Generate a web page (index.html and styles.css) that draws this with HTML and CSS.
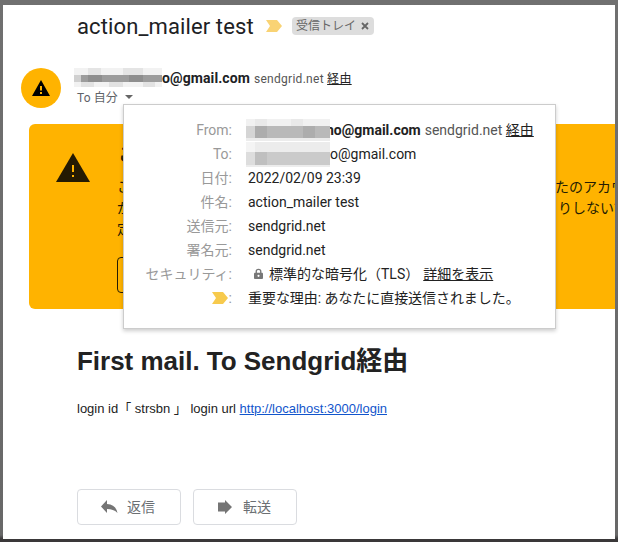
FILE: index.html
```html
<!DOCTYPE html>
<html lang="ja">
<head>
<meta charset="utf-8">
<title>action_mailer test</title>
<link rel="stylesheet" href="styles.css">
</head>
<body>
<main class="window">
  <header class="subject">
    <h1>action_mailer test</h1>
    <svg class="marker" width="17" height="12" viewBox="0 0 17 12"><path d="M0 0H11L16 6L11 12H0L4 6Z"/></svg>
    <span class="label">受信トレイ <svg width="8" height="8" viewBox="0 0 8 8"><path d="M1 1L7 7M7 1L1 7"/></svg></span>
  </header>
  <section class="sender">
    <div class="avatar"><svg width="18" height="16" viewBox="0 0 18 16"><path d="M9 0L18 16H0Z"/><path class="cut" d="M8 6h2v4.5H8zM8 12h2v2H8z"/></svg></div>
    <div class="who">
      <div class="from">
        <svg class="mosaic" width="88" height="19" viewBox="0 0 88 19" shape-rendering="crispEdges">
          <path fill="#f2f2f2" d="M0 0h88v19H0z"/><path fill="#e4e4e4" d="M14 0h13v7H14zM49 0h20v7H49z"/><path fill="#d0d0d0" d="M0 7h7v7H0z"/><path fill="#9c9c9c" d="M7 7h81v7H7z"/><path fill="#8e8e8e" d="M14 7h14v7H14zM55 7h14v7H55z"/><path fill="#e2e2e2" d="M7 14h13v5H7zM35 14h14v5H35zM69 14h12v5H69z"/>
        </svg><b>o@gmail.com</b><span class="via">sendgrid.net <u>経由</u></span>
      </div>
      <div class="to">To 自分 <i class="caret"></i></div>
    </div>
  </section>
  <section class="banner">
    <svg class="alert" width="34" height="29" viewBox="0 0 34 29"><path d="M17 0L34 29H0Z"/><path class="cut" d="M16 12h2v7h-2zM16 22h2v2h-2z"/></svg>
    <div class="warning">
      <strong>こ</strong>
      <p><span>こ</span><span class="tail">たのアカウ</span></p>
      <p><span>が</span><span class="tail second">りしないで</span></p>
      <p><span>定</span></p>
      <span class="action"></span>
    </div>
  </section>
  <article class="mail">
    <h2>First mail. To Sendgrid経由</h2>
    <p>login id「 strsbn 」 login url <a href="#">http://localhost:3000/login</a></p>
  </article>
  <footer class="replies">
    <button><svg width="17" height="14" viewBox="0 0 17 14"><path d="M6 0V4C12 4.5 15.5 7.5 16.5 13C13.500 10 10.500 9 6 9V13L0 6.500Z"/></svg><span>返信</span></button>
    <button><svg width="17" height="14" viewBox="0 0 17 14"><path d="M1 2.500H8V0L15 7L8 14V11.500H1Z"/></svg><span>転送</span></button>
  </footer>
</main>
<dl class="details">
  <dt>From:</dt><dd class="redacted"><svg class="mosaic" width="84" height="22" viewBox="0 0 84 22" shape-rendering="crispEdges"><path fill="#f1f1f1" d="M0 0h84v7H0z"/><path fill="#e9e9e9" d="M9 0h12v7H9zM45 0h12v7H45z"/><path fill="#d5d5d5" d="M0 7h9v12H0z"/><path fill="#b9b9b9" d="M9 7h75v12H9z"/><path fill="#adadad" d="M9 7h12v12H9zM57 7h12v12H57z"/><path fill="#ececec" d="M0 19h84v3H0z"/></svg><b>no@gmail.com</b><span class="via">sendgrid.net <u>経由</u></span></dd>
  <dt>To:</dt><dd class="redacted"><svg class="mosaic" width="84" height="25" viewBox="0 0 84 25" shape-rendering="crispEdges"><path fill="#ececec" d="M0 0h84v25H0z"/><path fill="#f4f4f4" d="M0 0h9v10H0z"/><path fill="#ddd" d="M0 10h9v13H0z"/><path fill="#cacaca" d="M9 10h75v13H9z"/><path fill="#bfbfbf" d="M9 10h12v13H9z"/></svg><span>o@gmail.com</span></dd>
  <dt>日付:</dt><dd class="date">2022/02/09 23:39</dd>
  <dt>件名:</dt><dd>action_mailer test</dd>
  <dt>送信元:</dt><dd>sendgrid.net</dd>
  <dt>署名元:</dt><dd>sendgrid.net</dd>
  <dt>セキュリティ:</dt><dd class="tls"><svg width="9" height="12" viewBox="0 0 10 12"><path class="shackle" d="M2.5 5V3a2.5 2.2 0 0 1 5 0V5"/><rect y="4.5" width="10" height="7" rx="1"/><circle class="hole" cx="5" cy="8" r="1.2"/></svg>標準的な暗号化（TLS） <u>詳細を表示</u></dd>
  <dt><svg class="marker strong" width="17" height="12" viewBox="0 0 17 12"><path d="M0 0H11L16 6L11 12H0L4 6Z"/></svg>:</dt><dd class="reason">重要な理由: あなたに直接送信されました。</dd>
</dl>
</body>
</html>
```
FILE: styles.css
```css
* { box-sizing: border-box; }
body { margin: 0; height: 542px; overflow: hidden; position: relative; background: linear-gradient(#707070 0, #686868 535px, #3a3839 539px); color: #202124; font-family: Roboto, "Noto Sans CJK JP", sans-serif; padding: 5px 3px 3px; }
svg { flex: none; display: block; }
.window { height: 534px; background: #fff; overflow: hidden; }
.subject { display: flex; align-items: center; height: 42px; padding-left: 74px; }
h1 { margin: 0; width: 189px; font-size: 22px; font-weight: 400; letter-spacing: .12px; white-space: nowrap; }
.marker { fill: #f9d374; }
.marker.strong { fill: #f7ca4d; }
.label { display: flex; align-items: center; gap: 5px; margin-left: 9px; width: 82px; height: 18px; padding-left: 4px; border-radius: 4px; background: #ddd; color: #666; font-size: 12px; line-height: 16px; padding-bottom: 1px; white-space: nowrap; }
.label svg { margin-top: 1px; }
.label path { stroke: #666; stroke-width: 1.8; }
.sender { display: flex; height: 77px; padding: 16px 0 0 18px; }
.avatar { width: 40px; height: 40px; margin-top: 5px; border-radius: 50%; background: #ffb300; display: flex; align-items: center; justify-content: center; }
.cut { fill: #ffb300; }
.who { margin-left: 13px; padding-top: 5px; white-space: nowrap; }
.from { display: flex; align-items: center; height: 19px; font-size: 14px; }
.from b { letter-spacing: .1px; }
.via { margin-left: 4px; font-size: 12px; color: #555; letter-spacing: .28px; }
.via u { color: #222; }
.to { display: flex; align-items: center; height: 19px; padding-left: 3px; font-size: 12px; letter-spacing: .1px; color: #5f6368; }
.caret { margin-left: 7px; border: 4px solid transparent; border-top-color: #666; border-bottom: 0; }
.banner { display: flex; height: 185px; margin-left: 26px; padding: 29px 0 0 27px; border-radius: 6px 0 0 6px; background: #ffb300; color: #241c03; }
.alert { fill: #241a02; }
.warning { margin: -8px 0 0 27px; flex: 1; white-space: nowrap; font-size: 14px; }
.warning strong { display: block; height: 32px; padding-left: 1px; font-size: 18px; line-height: 20px; font-weight: 500; }
.warning p { display: flex; margin: 0; height: 21px; line-height: 21px; }
.warning p span:first-child { width: 438px; }
.warning .second { margin-left: 3px; }
.action { display: block; width: 120px; height: 36px; margin-top: 17px; border: 1px solid #241c03; border-radius: 4px; }
.mail { padding-left: 74px; height: 180px; font-family: "Liberation Sans", "Noto Sans CJK JP", sans-serif; white-space: nowrap; color: #222; }
h2 { margin: 0; padding-top: 32px; height: 84px; line-height: 40px; font-size: 26px; letter-spacing: -.02px; }
.mail p { margin: 0; font-size: 13px; line-height: 31px; }
.mail a { color: #15c; }
.replies { display: flex; gap: 12px; padding-left: 74px; }
button { display: flex; align-items: center; width: 104px; height: 36px; padding: 0 0 0 23px; border: 1px solid #dadce0; border-radius: 4px; background: #fff; font: 14px Roboto, "Noto Sans CJK JP", sans-serif; color: #6b6f73; }
button svg { fill: #757575; margin-right: 9px; }
button span { padding-bottom: 2px; }
.details { position: absolute; left: 123px; top: 104px; width: 433px; height: 225px; margin: 0; padding: 13px 0; border: 1px solid #ccc; background: #fff; box-shadow: 0 2px 4px rgba(0,0,0,.2); display: grid; grid-template-columns: 108px 1fr; column-gap: 16px; grid-auto-rows: 24px; font-size: 14px; line-height: 24px; white-space: nowrap; color: #222; }
dt { display: flex; justify-content: flex-end; align-items: center; color: #999; }
dd { margin: 0; display: flex; align-items: center; }
.redacted { margin-left: -2px; }
.redacted .mosaic { z-index: 1; }
.redacted b { margin-left: -4px; }
.details .via { font-size: 14px; letter-spacing: 0; }
.tls svg { margin: 0 6px 0 6px; fill: #777; }
.tls u { margin-left: 4px; }
.reason { letter-spacing: -.06px; }
.shackle { fill: none; stroke: #777; stroke-width: 1.5; }
.hole { fill: #fff; }
```
